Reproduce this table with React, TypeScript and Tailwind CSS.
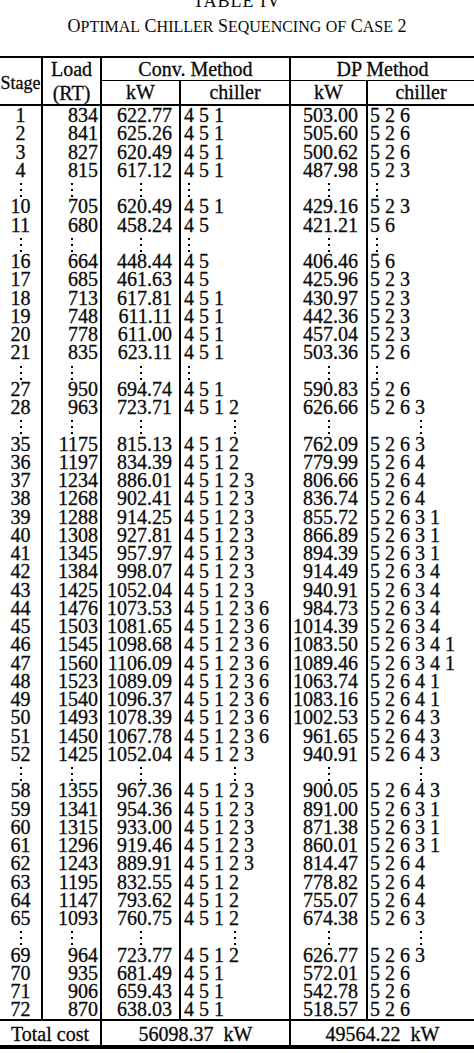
import React from "react";

type Row = [string, string, string, string, string, string];
type Item = Row | "early" | "late";

const data: Item[] = [
  ["1", "834", "622.77", "4 5 1", "503.00", "5 2 6"],
  ["2", "841", "625.26", "4 5 1", "505.60", "5 2 6"],
  ["3", "827", "620.49", "4 5 1", "500.62", "5 2 6"],
  ["4", "815", "617.12", "4 5 1", "487.98", "5 2 3"],
  "early",
  ["10", "705", "620.49", "4 5 1", "429.16", "5 2 3"],
  ["11", "680", "458.24", "4 5", "421.21", "5 6"],
  "early",
  ["16", "664", "448.44", "4 5", "406.46", "5 6"],
  ["17", "685", "461.63", "4 5", "425.96", "5 2 3"],
  ["18", "713", "617.81", "4 5 1", "430.97", "5 2 3"],
  ["19", "748", "611.11", "4 5 1", "442.36", "5 2 3"],
  ["20", "778", "611.00", "4 5 1", "457.04", "5 2 3"],
  ["21", "835", "623.11", "4 5 1", "503.36", "5 2 6"],
  "early",
  ["27", "950", "694.74", "4 5 1", "590.83", "5 2 6"],
  ["28", "963", "723.71", "4 5 1 2", "626.66", "5 2 6 3"],
  "late",
  ["35", "1175", "815.13", "4 5 1 2", "762.09", "5 2 6 3"],
  ["36", "1197", "834.39", "4 5 1 2", "779.99", "5 2 6 4"],
  ["37", "1234", "886.01", "4 5 1 2 3", "806.66", "5 2 6 4"],
  ["38", "1268", "902.41", "4 5 1 2 3", "836.74", "5 2 6 4"],
  ["39", "1288", "914.25", "4 5 1 2 3", "855.72", "5 2 6 3 1"],
  ["40", "1308", "927.81", "4 5 1 2 3", "866.89", "5 2 6 3 1"],
  ["41", "1345", "957.97", "4 5 1 2 3", "894.39", "5 2 6 3 1"],
  ["42", "1384", "998.07", "4 5 1 2 3", "914.49", "5 2 6 3 4"],
  ["43", "1425", "1052.04", "4 5 1 2 3", "940.91", "5 2 6 3 4"],
  ["44", "1476", "1073.53", "4 5 1 2 3 6", "984.73", "5 2 6 3 4"],
  ["45", "1503", "1081.65", "4 5 1 2 3 6", "1014.39", "5 2 6 3 4"],
  ["46", "1545", "1098.68", "4 5 1 2 3 6", "1083.50", "5 2 6 3 4 1"],
  ["47", "1560", "1106.09", "4 5 1 2 3 6", "1089.46", "5 2 6 3 4 1"],
  ["48", "1523", "1089.09", "4 5 1 2 3 6", "1063.74", "5 2 6 4 1"],
  ["49", "1540", "1096.37", "4 5 1 2 3 6", "1083.16", "5 2 6 4 1"],
  ["50", "1493", "1078.39", "4 5 1 2 3 6", "1002.53", "5 2 6 4 3"],
  ["51", "1450", "1067.78", "4 5 1 2 3 6", "961.65", "5 2 6 4 3"],
  ["52", "1425", "1052.04", "4 5 1 2 3", "940.91", "5 2 6 4 3"],
  "late",
  ["58", "1355", "967.36", "4 5 1 2 3", "900.05", "5 2 6 4 3"],
  ["59", "1341", "954.36", "4 5 1 2 3", "891.00", "5 2 6 3 1"],
  ["60", "1315", "933.00", "4 5 1 2 3", "871.38", "5 2 6 3 1"],
  ["61", "1296", "919.46", "4 5 1 2 3", "860.01", "5 2 6 3 1"],
  ["62", "1243", "889.91", "4 5 1 2 3", "814.47", "5 2 6 4"],
  ["63", "1195", "832.55", "4 5 1 2", "778.82", "5 2 6 4"],
  ["64", "1147", "793.62", "4 5 1 2", "755.07", "5 2 6 4"],
  ["65", "1093", "760.75", "4 5 1 2", "674.38", "5 2 6 3"],
  "late",
  ["69", "964", "723.77", "4 5 1 2", "626.77", "5 2 6 3"],
  ["70", "935", "681.49", "4 5 1", "572.01", "5 2 6"],
  ["71", "906", "659.43", "4 5 1", "542.78", "5 2 6"],
  ["72", "870", "638.03", "4 5 1", "518.57", "5 2 6"],
];

// vertical ellipsis drawn as three small dots
function Dots() {
  return (
    <span className="flex flex-col gap-[4px] pt-[4px]">
      <span className="h-[2px] w-[2px] bg-black" />
      <span className="h-[2px] w-[2px] bg-black" />
      <span className="h-[2px] w-[2px] bg-black" />
    </span>
  );
}

const cols = "grid grid-cols-[43px_59px_79px_110px_77px_106px]";

export default function App() {
  return (
    <div className="w-[474px] min-h-[1053px] overflow-hidden bg-white text-[#0a0a0a] font-['Liberation_Serif',serif] [-webkit-text-stroke:0.3px_#0a0a0a]">
      {/* Caption */}
      <div className="-mt-[11px] text-center text-[18px] leading-[25px] [-webkit-text-stroke:0px]">
        <p className="tracking-[1px]">TABLE IV</p>
        <p>
          O<span className="text-[16px]">PTIMAL</span> C<span className="text-[16px]">HILLER</span> S
          <span className="text-[16px]">EQUENCING</span> <span className="text-[16px]">OF</span> C
          <span className="text-[16px]">ASE</span> 2
        </p>
      </div>

      {/* Header */}
      <div className={`${cols} mt-[17px] grid-rows-[23px_23px] border-t-2 border-b-2 border-black text-[20px]`}>
        <div className="row-span-2 flex items-center justify-center border-r-2 border-black pt-[3px] text-[18px] leading-none">Stage</div>
        <div className="row-span-2 flex flex-col items-center justify-center border-r-2 border-black leading-[24px]">
          <span>Load</span>
          <span>(RT)</span>
        </div>
        <div className="col-span-2 border-b border-r-2 border-black text-center leading-[22px]">Conv. Method</div>
        <div className="col-span-2 border-b border-black text-center leading-[22px]">DP Method</div>
        <div className="border-r-2 border-black text-center leading-[23px]">kW</div>
        <div className="border-r-2 border-black text-center leading-[23px]">chiller</div>
        <div className="border-r-2 border-black text-center leading-[23px]">kW</div>
        <div className="text-center leading-[23px]">chiller</div>
      </div>

      {/* Body */}
      <div className={`${cols} auto-rows-[18.25px] text-[20px] leading-[18.25px] whitespace-pre`}>
        {data.map((r, i) =>
          typeof r === "string" ? (
            <React.Fragment key={i}>
              <div className="flex justify-center border-r-2 border-black"><Dots /></div>
              <div className="flex justify-center border-r-2 border-black"><Dots /></div>
              <div className="flex justify-center border-r-2 border-black"><Dots /></div>
              <div className={`flex border-r-2 border-black ${r === "early" ? "pl-[7px]" : "justify-center"}`}><Dots /></div>
              <div className="flex justify-center border-r-2 border-black"><Dots /></div>
              <div className={`flex ${r === "early" ? "pl-[8px]" : "justify-center"}`}><Dots /></div>
            </React.Fragment>
          ) : (
            <React.Fragment key={i}>
              <div className="border-r-2 border-black text-center">{r[0]}</div>
              <div className="border-r-2 border-black pr-[2px] text-right">{r[1]}</div>
              <div className="border-r-2 border-black pr-[7px] text-right">{r[2]}</div>
              <div className="border-r-2 border-black pl-[3px]">{r[3]}</div>
              <div className="border-r-2 border-black pr-[8px] text-right">{r[4]}</div>
              <div className="pl-[2px]">{r[5]}</div>
            </React.Fragment>
          )
        )}
      </div>

      {/* Total */}
      <div className="grid h-[30px] grid-cols-[102px_189px_183px] border-t-2 border-b-4 border-black text-[20px] leading-none">
        <div className="flex items-center justify-center border-r-2 border-black pt-[3px]">Total cost</div>
        <div className="flex items-center justify-center border-r-2 border-black pt-[3px] whitespace-pre">56098.37  kW</div>
        <div className="flex items-center justify-center pt-[3px] whitespace-pre">49564.22  kW</div>
      </div>
    </div>
  );
}
